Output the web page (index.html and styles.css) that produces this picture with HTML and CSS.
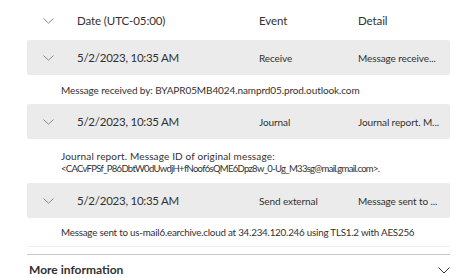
FILE: index.html
```html
<!DOCTYPE html>
<html>
<head>
<meta charset="utf-8">
<link rel="stylesheet" href="styles.css">
</head>
<body>
<div class="panel">
  <div class="table">
    <div class="row head">
      <span class="chev"><svg width="11" height="6" viewBox="0 0 11 6"><path d="M0.5 0.5 L5.5 5.2 L10.5 0.5" fill="none" stroke="#8a8886" stroke-width="1"/></svg></span>
      <span class="date">Date (UTC-05:00)</span>
      <span class="event">Event</span>
      <span class="detail">Detail</span>
    </div>
    <div class="row item">
      <span class="chev"><svg width="11" height="6" viewBox="0 0 11 6"><path d="M0.5 0.5 L5.5 5.2 L10.5 0.5" fill="none" stroke="#8a8886" stroke-width="1"/></svg></span>
      <span class="date">5/2/2023, 10:35 AM</span>
      <span class="event cell">Receive</span>
      <span class="detail cell">Message receive...</span>
    </div>
    <div class="expanded one">Message received by: BYAPR05MB4024.namprd05.prod.outlook.com</div>
    <div class="row item">
      <span class="chev"><svg width="11" height="6" viewBox="0 0 11 6"><path d="M0.5 0.5 L5.5 5.2 L10.5 0.5" fill="none" stroke="#8a8886" stroke-width="1"/></svg></span>
      <span class="date">5/2/2023, 10:35 AM</span>
      <span class="event cell">Journal</span>
      <span class="detail cell">Journal report. M...</span>
    </div>
    <div class="expanded two"><span class="line-a">Journal report. Message ID of original message:</span><br><span class="line-b">&lt;CACvFPSf_P86DbtW0dUwdjH+fNoof6sQME6Dpz8w_0-Ug_M33sg@mail.gmail.com&gt;.</span></div>
    <div class="row item">
      <span class="chev"><svg width="11" height="6" viewBox="0 0 11 6"><path d="M0.5 0.5 L5.5 5.2 L10.5 0.5" fill="none" stroke="#8a8886" stroke-width="1"/></svg></span>
      <span class="date">5/2/2023, 10:35 AM</span>
      <span class="event cell">Send external</span>
      <span class="detail cell">Message sent to ...</span>
    </div>
    <div class="expanded three">Message sent to us-mail6.earchive.cloud at 34.234.120.246 using TLS1.2 with AES256</div>
  </div>
  <div class="more">
    <span class="more-title">More information</span>
    <svg width="12" height="7" viewBox="0 0 12 7"><path d="M0.5 0.5 L6 6 L11.5 0.5" fill="none" stroke="#323130" stroke-width="1"/></svg>
  </div>
</div>
</body>
</html>
```

FILE: styles.css
```css
html, body {
  margin: 0;
  padding: 0;
  background: #ffffff;
}
body {
  font-family: "Lato", "Open Sans", sans-serif;
  color: #323130;
  width: 474px;
  height: 278px;
  overflow: hidden;
}
.panel {
  padding-left: 27px;
  width: 423px;
}
.table {
  border-bottom: 1px solid #f0efee;
}
.row {
  display: grid;
  grid-template-columns: 50px 182px 99px 92px;
  align-items: center;
  white-space: nowrap;
}
.head {
  height: 40px;
  font-size: 11.5px;
  letter-spacing: -0.1px;
}
.item {
  height: 35px;
  background: #ebebeb;
  border-radius: 2px;
  font-size: 11.5px;
  letter-spacing: -0.25px;
}
.chev {
  display: flex;
  padding-left: 16px;
  padding-top: 1px;
}
.cell {
  font-size: 10px;
  letter-spacing: -0.1px;
  overflow: hidden;
}
.expanded {
  font-size: 10px;
  letter-spacing: -0.1px;
  line-height: 12px;
  padding-left: 34px;
  color: #323130;
  white-space: nowrap;
}
.one {
  height: 29px;
  display: flex;
  align-items: center;
  padding-top: 1px;
  box-sizing: border-box;
}
.two {
  height: 44px;
  padding-top: 11px;
  box-sizing: border-box;
}
.line-a {
  letter-spacing: 0.15px;
}
.line-b {
  font-size: 9.5px;
  letter-spacing: -0.7px;
}
.three {
  height: 28px;
  display: flex;
  align-items: center;
  font-size: 9.8px;
  letter-spacing: -0.22px;
}
.more {
  border-top: 1px solid #c8c6c4;
  margin-top: 7px;
  height: 22px;
  display: flex;
  align-items: flex-start;
  justify-content: space-between;
}
.more svg {
  margin-top: 12px;
}
.more-title {
  font-size: 12px;
  line-height: 14px;
  font-weight: 700;
  padding-left: 2px;
  padding-top: 8px;
}
```
